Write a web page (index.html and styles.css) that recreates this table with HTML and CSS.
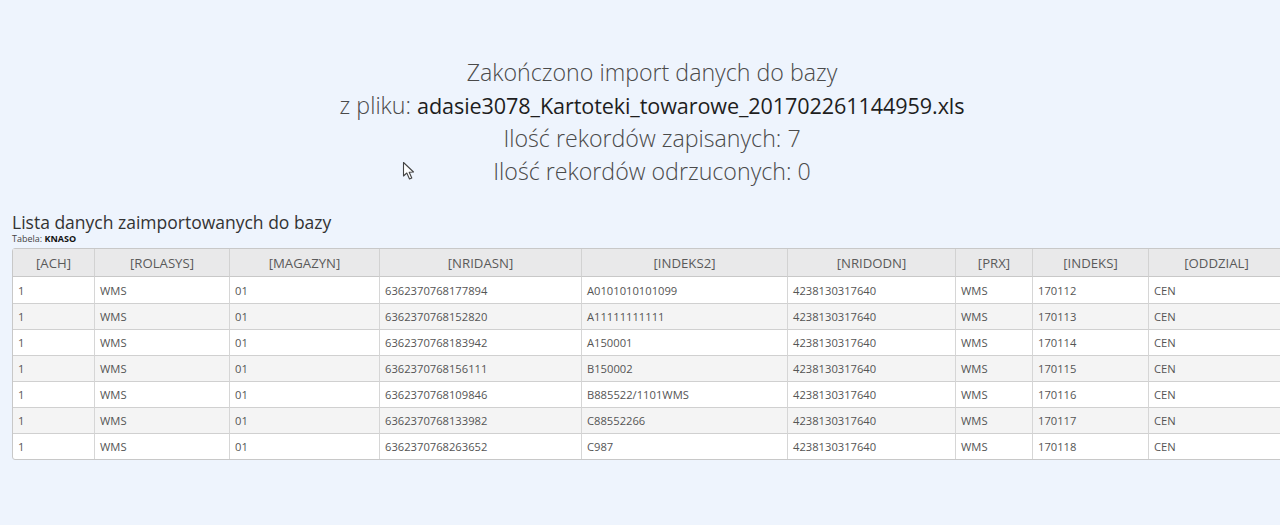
FILE: index.html
```html
<!DOCTYPE html>
<html lang="pl">
<head>
<meta charset="utf-8">
<title>Import danych</title>
<link rel="stylesheet" href="styles.css">
</head>
<body>
<div class="page">
  <section class="summary">
    <div class="line">Zakończono import danych do bazy</div>
    <div class="line">z pliku: <span class="file">adasie3078_Kartoteki_towarowe_201702261144959.xls</span></div>
    <div class="line">Ilość rekordów zapisanych: 7</div>
    <div class="line">Ilość rekordów odrzuconych: 0</div>
  </section>
  <section class="list">
    <h2 class="list-title">Lista danych zaimportowanych do bazy</h2>
    <div class="table-name">Tabela: <b>KNASO</b></div>
    <div class="table-wrap">
      <table class="data">
        <colgroup>
          <col class="c1"><col class="c2"><col class="c3"><col class="c4"><col class="c5"><col class="c6"><col class="c7"><col class="c8"><col class="c9">
        </colgroup>
        <thead>
          <tr><th>[ACH]</th><th>[ROLASYS]</th><th>[MAGAZYN]</th><th>[NRIDASN]</th><th>[INDEKS2]</th><th>[NRIDODN]</th><th>[PRX]</th><th>[INDEKS]</th><th>[ODDZIAL]</th></tr>
        </thead>
        <tbody>
          <tr><td>1</td><td>WMS</td><td>01</td><td>6362370768177894</td><td>A0101010101099</td><td>4238130317640</td><td>WMS</td><td>170112</td><td>CEN</td></tr>
          <tr><td>1</td><td>WMS</td><td>01</td><td>6362370768152820</td><td>A11111111111</td><td>4238130317640</td><td>WMS</td><td>170113</td><td>CEN</td></tr>
          <tr><td>1</td><td>WMS</td><td>01</td><td>6362370768183942</td><td>A150001</td><td>4238130317640</td><td>WMS</td><td>170114</td><td>CEN</td></tr>
          <tr><td>1</td><td>WMS</td><td>01</td><td>6362370768156111</td><td>B150002</td><td>4238130317640</td><td>WMS</td><td>170115</td><td>CEN</td></tr>
          <tr><td>1</td><td>WMS</td><td>01</td><td>6362370768109846</td><td>B885522/1101WMS</td><td>4238130317640</td><td>WMS</td><td>170116</td><td>CEN</td></tr>
          <tr><td>1</td><td>WMS</td><td>01</td><td>6362370768133982</td><td>C88552266</td><td>4238130317640</td><td>WMS</td><td>170117</td><td>CEN</td></tr>
          <tr><td>1</td><td>WMS</td><td>01</td><td>6362370768263652</td><td>C987</td><td>4238130317640</td><td>WMS</td><td>170118</td><td>CEN</td></tr>
        </tbody>
      </table>
    </div>
  </section>
  <svg class="cursor" width="14" height="20" viewBox="0 0 14 20"><path d="M1.5 1.5 L1.5 15 L4.8 12 L7.5 18 L9.8 17 L7.2 11.2 L11.5 11 Z" fill="#fff" stroke="#444" stroke-width="1.1" stroke-linejoin="round"/></svg>
</div>
</body>
</html>
```

FILE: styles.css
```css
html, body {
  margin: 0;
  padding: 0;
  background: #eef4fd;
  overflow: hidden;
}
.page {
  position: relative;
  width: 1280px;
  height: 525px;
  font-family: "Open Sans", "Noto Sans", sans-serif;
  color: #555;
}
.summary {
  padding-top: 56px;
  padding-left: 24px;
  text-align: center;
  font-weight: 300;
  font-size: 23.2px;
  line-height: 33px;
  color: #4a4a4a;
}
.summary .file {
  font-weight: 400;
  font-size: 21.6px;
  letter-spacing: -0.1px;
  color: #1e1e1e;
}
.list {
  margin-top: 23px;
  padding-left: 12px;
}
.list-title {
  margin: 0;
  font-size: 17.5px;
  font-weight: 400;
  line-height: 22px;
  color: #333;
}
.table-name {
  font-size: 9px;
  line-height: 12px;
  color: #444;
  margin-bottom: 3px;
}
.table-name b {
  color: #111;
}
.table-wrap {
  width: 1271px;
}
.data {
  width: 1271px;
  table-layout: fixed;
  border-collapse: separate;
  border-spacing: 0;
  border: 1px solid #c8c8c8;
  border-radius: 3px;
  background: #fff;
  font-size: 11.2px;
}
.c1 { width: 81px; }
.c2 { width: 135px; }
.c3 { width: 150px; }
.c4 { width: 202px; }
.c5 { width: 206px; }
.c6 { width: 168px; }
.c7 { width: 77px; }
.c8 { width: 116px; }
.c9 { width: 136px; }
.data th {
  background: #e9e9ea;
  font-weight: 400;
  font-size: 13.2px;
  color: #5a5a5a;
  height: 27px;
  padding: 0;
  text-align: center;
  border-left: 1px solid #d2d2d2;
  border-bottom: 1px solid #c8c8c8;
}
.data td {
  height: 25px;
  padding: 0 0 0 5px;
  color: #555;
  border-left: 1px solid #d6d6d6;
  border-bottom: 1px solid #d0d0d0;
  white-space: nowrap;
}
.data tbody tr:first-child td {
  height: 26px;
}
.data th:first-child, .data td:first-child {
  border-left: none;
}
.data tbody tr:last-child td {
  border-bottom: none;
}
.data tbody tr:nth-child(even) td {
  background: #f4f4f4;
}
.cursor {
  position: absolute;
  left: 402px;
  top: 161px;
}
```
